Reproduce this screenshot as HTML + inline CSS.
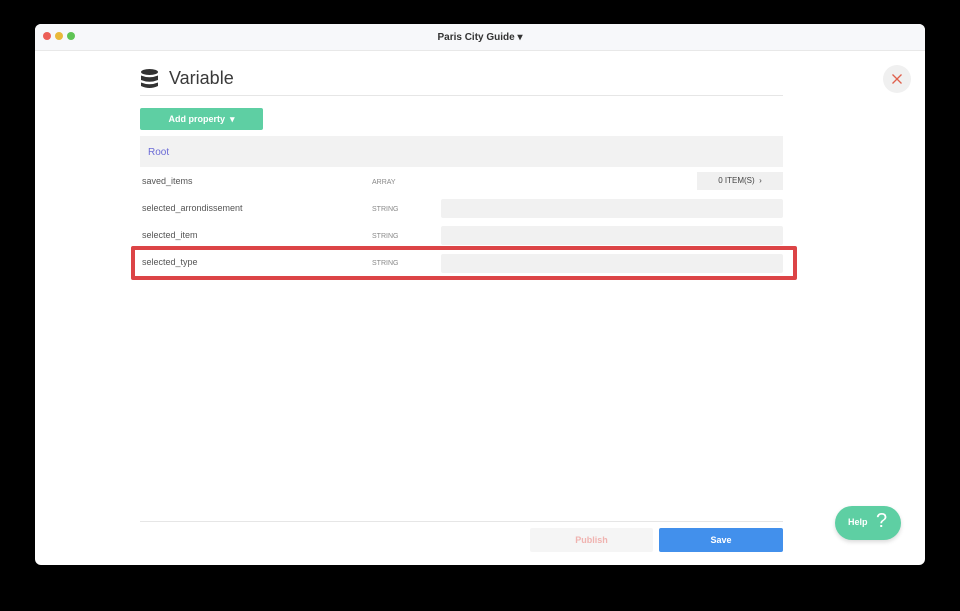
<!DOCTYPE html>
<html><head><style>
*{box-sizing:border-box;margin:0;padding:0}
body{width:960px;height:611px;background:#000;font-family:"Liberation Sans",sans-serif;position:relative;overflow:hidden}
.win{position:absolute;left:35px;top:24px;width:890px;height:541px;background:#fff;border-radius:6px;overflow:hidden}
.bar{height:27px;background:#f7f8fa;border-bottom:1px solid #e8e8e8;text-align:center;font-size:10px;line-height:27px;color:#333;font-weight:bold}
.dot{position:absolute;top:8px;width:8px;height:8px;border-radius:50%}
.a{position:absolute}
.lbl{font-size:9px;color:#555}
.typ{font-size:7px;color:#888}
.fld{position:absolute;left:406px;width:342px;height:19px;background:#f1f1f1;border-radius:2px}
</style></head><body>
<div class="win">
<div class="bar">Paris City Guide ▾</div>
<div class="dot" style="left:8px;background:#ec5f57"></div>
<div class="dot" style="left:20px;background:#e9b93a"></div>
<div class="dot" style="left:32px;background:#5fc454"></div>
<svg class="a" style="left:106px;top:45px" width="17" height="20" viewBox="0 0 17 20"><ellipse cx="8.5" cy="3" rx="8.5" ry="3" fill="#333"/><path d="M0 6.5Q8.5 10 17 6.5V11Q8.5 14.5 0 11Z" fill="#333"/><path d="M0 13.5Q8.5 17 17 13.5V17Q8.5 21 0 17Z" fill="#333"/></svg>
<div class="a" style="left:134px;top:44px;font-size:18px;color:#3a3a3a">Variable</div>
<div class="a" style="left:105px;top:71px;width:643px;height:1px;background:#e6e6e6"></div>
<div class="a" style="left:105px;top:84px;width:123px;height:22px;background:#5ecfa3;border-radius:2px;color:#fff;font-size:9px;font-weight:bold;text-align:center;line-height:22px">Add property &nbsp;▾</div>
<div class="a" style="left:105px;top:112px;width:643px;height:31px;background:#f2f2f2"></div>
<div class="a" style="left:113px;top:123px;font-size:10px;color:#6b6bd6">Root</div>
<div class="a lbl" style="left:107px;top:152px">saved_items</div><div class="a typ" style="left:337px;top:155px">ARRAY</div>
<div class="a" style="left:662px;top:148px;width:86px;height:18px;background:#f0f0f0;font-size:8px;color:#444;text-align:center;line-height:18px">0 ITEM(S) &nbsp;›</div>
<div class="a lbl" style="left:107px;top:179px">selected_arrondissement</div><div class="a typ" style="left:337px;top:182px">STRING</div><div class="fld" style="top:175px"></div>
<div class="a lbl" style="left:107px;top:206px">selected_item</div><div class="a typ" style="left:337px;top:209px">STRING</div><div class="fld" style="top:202px"></div>
<div class="a lbl" style="left:107px;top:233px">selected_type</div><div class="a typ" style="left:337px;top:236px">STRING</div><div class="fld" style="top:230px"></div>
<div class="a" style="left:96px;top:222px;width:666px;height:34px;border:4px solid #dc4446;border-radius:2px"></div>
<div class="a" style="left:848px;top:41px;width:28px;height:28px;border-radius:50%;background:#f0f0f0"></div>
<svg class="a" style="left:857px;top:50px" width="10" height="10" viewBox="0 0 10 10"><path d="M0.5 0.5L9.5 9.5M9.5 0.5L0.5 9.5" stroke="#e0604c" stroke-width="1.3"/></svg>
<div class="a" style="left:105px;top:497px;width:643px;height:1px;background:#e6e6e6"></div>
<div class="a" style="left:495px;top:504px;width:123px;height:24px;background:#f5f5f5;border-radius:2px;color:#f0b3b0;font-size:9px;font-weight:bold;text-align:center;line-height:24px">Publish</div>
<div class="a" style="left:624px;top:504px;width:124px;height:24px;background:#4290ec;border-radius:2px;color:#fff;font-size:9px;font-weight:bold;text-align:center;line-height:24px">Save</div>
<div class="a" style="left:800px;top:482px;width:66px;height:34px;border-radius:17px;background:#5ecfa3;color:#fff;box-shadow:0 2px 4px rgba(0,0,0,.15)"><span class="a" style="left:13px;top:11px;font-size:9px;font-weight:bold">Help</span><span class="a" style="left:41px;top:4px;font-size:20px">?</span></div>
</div>
</body></html>
